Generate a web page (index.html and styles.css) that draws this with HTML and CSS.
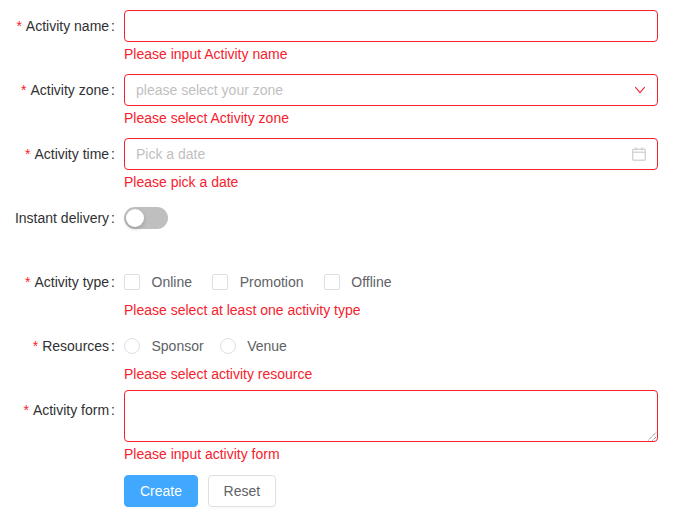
FILE: index.html
```html
<!DOCTYPE html>
<html lang="en">
<head>
<meta charset="utf-8">
<title>Activity form</title>
<link rel="stylesheet" href="styles.css">
</head>
<body>
<form class="form">
  <div class="row">
    <div class="label"><span class="star">*</span>Activity name<span class="colon">:</span></div>
    <div class="field">
      <div class="control"><div class="input"></div></div>
      <div class="error">Please input Activity name</div>
    </div>
  </div>
  <div class="row">
    <div class="label"><span class="star">*</span>Activity zone<span class="colon">:</span></div>
    <div class="field">
      <div class="control"><div class="input">
        <span class="placeholder">please select your zone</span>
        <svg class="icon-arrow" width="12" height="12" viewBox="0 0 12 12"><path d="M1.3 3.2 6 8.6l4.7-5.4" fill="none" stroke="#f5222d" stroke-width="1.1"/></svg>
      </div></div>
      <div class="error">Please select Activity zone</div>
    </div>
  </div>
  <div class="row">
    <div class="label"><span class="star">*</span>Activity time<span class="colon">:</span></div>
    <div class="field">
      <div class="control"><div class="input">
        <span class="placeholder">Pick a date</span>
        <svg class="icon-cal" width="14" height="14" viewBox="0 0 14 14"><path d="M.8 2.2h12.4v11H.8zM.8 5.2h12.4M4 .3v3M10 .3v3" fill="none" stroke="#c4c4c4" stroke-width="1"/></svg>
      </div></div>
      <div class="error">Please pick a date</div>
    </div>
  </div>
  <div class="row row-plain">
    <div class="label">Instant delivery<span class="colon">:</span></div>
    <div class="field">
      <div class="control"><span class="switch"><span class="knob"></span></span></div>
    </div>
  </div>
  <div class="row">
    <div class="label"><span class="star">*</span>Activity type<span class="colon">:</span></div>
    <div class="field">
      <div class="control options">
        <span class="option"><span class="box"></span>Online</span>
        <span class="option"><span class="box"></span>Promotion</span>
        <span class="option"><span class="box"></span>Offline</span>
      </div>
      <div class="error">Please select at least one activity type</div>
    </div>
  </div>
  <div class="row">
    <div class="label"><span class="star">*</span>Resources<span class="colon">:</span></div>
    <div class="field">
      <div class="control options options-radio">
        <span class="option"><span class="box round"></span>Sponsor</span>
        <span class="option"><span class="box round"></span>Venue</span>
      </div>
      <div class="error">Please select activity resource</div>
    </div>
  </div>
  <div class="row">
    <div class="label"><span class="star">*</span>Activity form<span class="colon">:</span></div>
    <div class="field">
      <div class="control control-area"><div class="input area">
        <svg class="grip" width="9" height="9" viewBox="0 0 9 9"><path d="M0 8.5 8.5 0M4.5 8.5 8.5 4.5" fill="none" stroke="#555" stroke-width="1" stroke-dasharray="1 1"/></svg>
      </div></div>
      <div class="error">Please input activity form</div>
    </div>
  </div>
  <div class="row row-actions">
    <div class="label"></div>
    <div class="field buttons">
      <span class="btn primary">Create</span>
      <span class="btn">Reset</span>
    </div>
  </div>
</form>
</body>
</html>
```
FILE: styles.css
```css
* { box-sizing: border-box; }
html, body { margin: 0; background: #fff; }
body {
  font-family: "Liberation Sans", Arial, sans-serif;
  font-size: 14px;
  color: #606266;
}
.form { width: 658px; padding-top: 10px; }
.row { display: flex; margin-bottom: 10px; }
.row-plain { margin-bottom: 32px; }
.row-actions { margin-top: 11px; }
.label {
  width: 124px;
  flex: none;
  height: 32px;
  line-height: 32px;
  padding-right: 9px;
  text-align: right;
  color: #303133;
  white-space: nowrap;
}
.star { color: #f5222d; margin-right: 4px; }
.colon { margin-left: 2px; }
.field { flex: 1; min-width: 0; }
.control { height: 32px; display: flex; align-items: center; }
.control-area { height: 48px; margin-top: -4px; align-items: flex-start; }
.input {
  position: relative;
  width: 100%;
  height: 32px;
  padding: 0 11px;
  line-height: 30px;
  border: 1px solid #f5222d;
  border-radius: 4px;
  background: #fff;
}
.area { height: 52px; flex: none; }
.placeholder { color: #bfbfbf; }
.icon-arrow { position: absolute; right: 11px; top: 9px; }
.icon-cal { position: absolute; right: 11px; top: 8px; }
.grip { position: absolute; right: 0; bottom: 0; }
.error { height: 22px; line-height: 24px; color: #f5222d; }
.control-area + .error { margin-top: 4px; }
.switch {
  position: relative;
  display: block;
  width: 44px;
  height: 22px;
  border-radius: 11px;
  background: #bfbfbf;
}
.knob {
  position: absolute;
  left: 2px;
  top: 2px;
  width: 18px;
  height: 18px;
  border-radius: 50%;
  background: #fff;
  box-shadow: 0 2px 4px rgba(0, 35, 11, .2);
}
.options { gap: 20.25px; }
.options-radio { gap: 16px; }
.option { display: flex; align-items: center; line-height: 32px; white-space: nowrap; }
.box {
  width: 16px;
  height: 16px;
  margin-right: 11.5px;
  border: 1px solid #dcdfe6;
  border-radius: 2px;
  background: #fff;
}
.round { border-radius: 50%; }
.buttons { display: flex; gap: 10px; }
.btn {
  display: block;
  height: 32px;
  padding: 0 14.5px;
  line-height: 30px;
  border: 1px solid #dcdfe6;
  border-radius: 4px;
  color: #606266;
  background: #fff;
  box-shadow: 0 2px 0 rgba(0, 0, 0, .02);
}
.primary { padding: 0 15px; border-color: #40a9ff; background: #40a9ff; color: #fff; }
```
